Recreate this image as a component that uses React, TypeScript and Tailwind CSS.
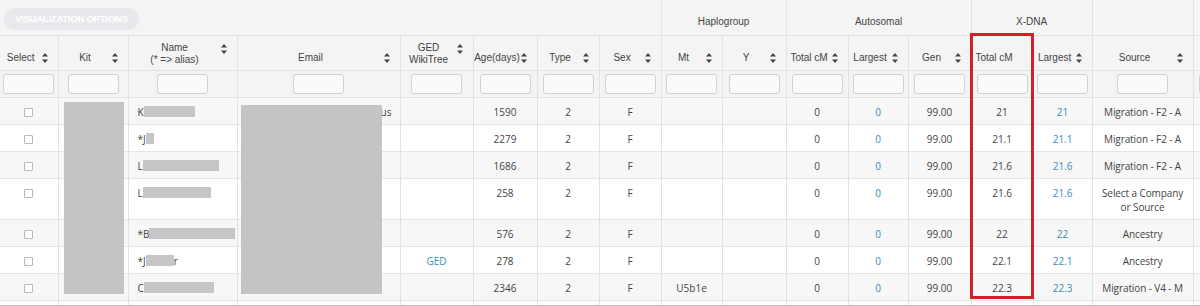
import React from "react";

type Col = { key: string; label: string[]; w: number; sort?: boolean };

const COLS: Col[] = [
  { key: "select", label: ["Select"], w: 58 },
  { key: "kit", label: ["Kit"], w: 70 },
  { key: "name", label: ["Name", "(* => alias)"], w: 109 },
  { key: "email", label: ["Email"], w: 163 },
  { key: "ged", label: ["GED", "WikiTree"], w: 73 },
  { key: "age", label: ["Age(days)"], w: 64 },
  { key: "type", label: ["Type"], w: 62 },
  { key: "sex", label: ["Sex"], w: 62 },
  { key: "mt", label: ["Mt"], w: 61 },
  { key: "y", label: ["Y"], w: 64 },
  { key: "atot", label: ["Total cM"], w: 62 },
  { key: "alarg", label: ["Largest"], w: 60 },
  { key: "gen", label: ["Gen"], w: 63 },
  { key: "xtot", label: ["Total cM"], w: 62, sort: false },
  { key: "xlarg", label: ["Largest"], w: 59 },
  { key: "source", label: ["Source"], w: 101 },
  { key: "extra", label: [""], w: 80 },
];

type Row = {
  init: string;
  box: number;
  tail?: string;
  email?: string;
  ged?: string;
  age: number;
  mt?: string;
  x: string;
  src: string[];
};

const ROWS: Row[] = [
  { init: "K", box: 51, email: "us", age: 1590, x: "21", src: ["Migration - F2 - A"] },
  { init: "*J", box: 8, age: 2279, x: "21.1", src: ["Migration - F2 - A"] },
  { init: "L", box: 76, age: 1686, x: "21.6", src: ["Migration - F2 - A"] },
  { init: "L", box: 68, age: 258, x: "21.6", src: ["Select a Company", "or Source"] },
  { init: "*B", box: 86, age: 576, x: "22", src: ["Ancestry"] },
  { init: "*J", box: 28, tail: "r", ged: "GED", age: 278, x: "22.1", src: ["Ancestry"] },
  { init: "C", box: 70, age: 2346, mt: "U5b1e", x: "22.3", src: ["Migration - V4 - M"] },
];

const SortIcon = ({ hidden }: { hidden?: boolean }) => (
  <svg width="6" height="10" viewBox="0 0 6 10" className={hidden ? "invisible" : ""}>
    <path d="M3 0 L6 3.6 L0 3.6 Z M3 10 L6 6.4 L0 6.4 Z" fill="#444" />
  </svg>
);

const Checkbox = () => (
  <span className="inline-block w-[9px] h-[9px] border border-[#b9b9b9] rounded-[1px] bg-white align-middle" />
);

const cellBorder = "border-r border-[#e2e2e2]";
const td = `${cellBorder} align-top pt-[7px] text-center`;

export default function App() {
  return (
    <div
      className="relative w-[1200px] h-[306px] overflow-hidden bg-white border-b border-[#bdbdbd]"
      style={{ fontFamily: "'Open Sans', sans-serif" }}
    >
      <table className="table-fixed border-collapse w-[1273px] text-[10px] text-[#444]">
        <colgroup>
          {COLS.map((c) => (
            <col key={c.key} style={{ width: c.w }} />
          ))}
        </colgroup>
        <thead className="bg-[#f4f4f4]" style={{ fontFamily: "'Liberation Sans', Arial, sans-serif" }}>
          {/* group row */}
          <tr className="h-[35px] border-b border-[#e2e2e2]">
            <th colSpan={8} className={`${cellBorder} text-left align-top pt-[8px] pl-[4px]`}>
              <button className="h-[22px] px-[11px] rounded-full bg-[#e7e9ec] text-white text-[9.5px] font-bold tracking-tight uppercase">
                Visualization options
              </button>
            </th>
            <th colSpan={2} className={`${cellBorder} align-bottom pb-[6px] font-normal text-[10px] text-[#444]`}>
              Haplogroup
            </th>
            <th colSpan={3} className={`${cellBorder} align-bottom pb-[6px] font-normal text-[10px] text-[#444]`}>
              Autosomal
            </th>
            <th colSpan={2} className={`${cellBorder} align-bottom pb-[6px] font-normal text-[10px] text-[#444]`}>
              X-DNA
            </th>
            <th className={cellBorder} />
            <th />
          </tr>
          {/* header row */}
          <tr className="h-[35px] border-b border-[#e2e2e2]">
            {COLS.map((c) => {
              const multi = c.label.length > 1;
              return (
                <th
                  key={c.key}
                  className={`${cellBorder} font-normal p-0 align-bottom ${multi ? "pb-[4px]" : "pb-[6px]"}`}
                >
                  {c.label[0] !== "" && (
                    <div className="flex items-center pr-[10px] text-[10px] text-[#444] leading-[12px]">
                      <div className="flex-1 text-center whitespace-nowrap">
                        {c.label.map((l, i) => (
                          <div key={i}>{l}</div>
                        ))}
                      </div>
                      <div className={multi ? "self-start mt-[2px]" : ""}>
                        <SortIcon hidden={c.sort === false} />
                      </div>
                    </div>
                  )}
                </th>
              );
            })}
          </tr>
          {/* filter row */}
          <tr className="h-[27px] border-b border-[#e2e2e2]">
            {COLS.map((c) => (
              <th key={c.key} className={`${cellBorder} p-0`}>
                <div className={`flex ${c.key === "extra" ? "justify-start pl-[5px]" : "justify-center"}`}>
                  <div className="w-[51px] h-[20px] rounded-[3px] border border-[#d2d2d2] bg-[#fafafa]" />
                </div>
              </th>
            ))}
          </tr>
        </thead>
        <tbody className="leading-[14px]">
          {ROWS.map((r, i) => (
            <tr key={i} className={`border-b border-[#e6e6e6] ${i % 2 === 0 ? "bg-[#f7f7f7]" : "bg-white"}`}>
              <td className={`${td} pb-[5px]`}>
                <Checkbox />
              </td>
              <td className={cellBorder} />
              <td className={`${cellBorder} align-top pt-[7px] pl-[9px] whitespace-nowrap`}>
                {r.init}
                <span className="inline-block h-[11px] bg-[#c6c6c6] align-[-1px]" style={{ width: r.box }} />
                {r.tail}
              </td>
              <td className={`${cellBorder} align-top pt-[7px] pr-[8px] text-right`}>{r.email}</td>
              <td className={`${td} text-[#3a8dbf]`}>{r.ged}</td>
              <td className={td}>{r.age}</td>
              <td className={td}>2</td>
              <td className={td}>F</td>
              <td className={td}>{r.mt}</td>
              <td className={cellBorder} />
              <td className={td}>0</td>
              <td className={`${td} text-[#3a8dbf]`}>0</td>
              <td className={td}>99.00</td>
              <td className={td}>{r.x}</td>
              <td className={`${td} text-[#3a8dbf]`}>{r.x}</td>
              <td className={`${td} pb-[5px] whitespace-nowrap tracking-[-0.1px]`}>
                {r.src.map((s, j) => (
                  <div key={j}>{s}</div>
                ))}
              </td>
              <td />
            </tr>
          ))}
          <tr className="h-[20px]">
            {COLS.map((c) => (
              <td key={c.key} className={cellBorder} />
            ))}
          </tr>
        </tbody>
      </table>

      {/* redactions */}
      <div className="absolute left-[64px] top-[102px] w-[60px] h-[192px] bg-[#c4c4c4]" />
      <div className="absolute left-[241px] top-[105px] w-[141px] h-[189px] bg-[#c4c4c4]" />

      {/* highlight annotation */}
      <div className="absolute left-[970px] top-[33px] w-[64px] h-[266px] border-[3px] border-[#d2202b]" />
    </div>
  );
}
